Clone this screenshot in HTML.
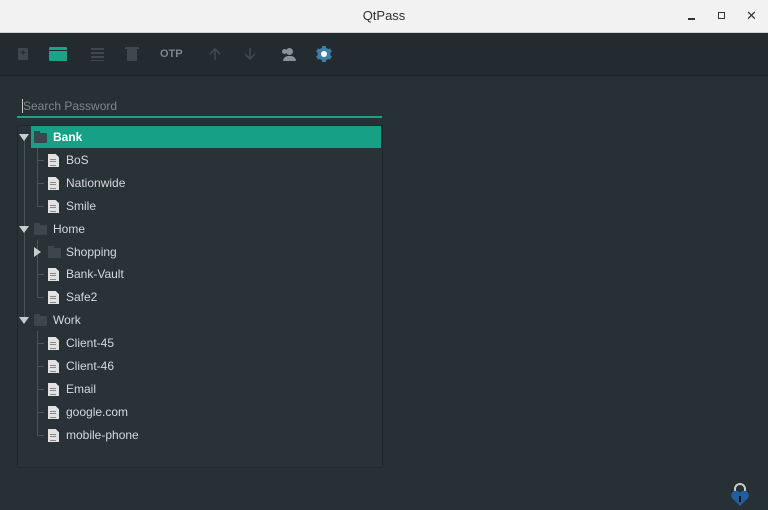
<!DOCTYPE html><html><head><style>
body{margin:0;width:768px;height:510px;background:#263035;font-family:"Liberation Sans","DejaVu Sans",sans-serif;overflow:hidden;position:relative}
.a{position:absolute}
.title{left:0;top:0;width:768px;height:32px;background:#f2f2f2;border-bottom:1px solid #d0d0d0}
.tb{left:0;top:33px;width:768px;height:42px;background:#232b30;border-bottom:1px solid #1d2327}
.t{font-size:12px;color:#d5d9db;position:absolute}
.doc{position:absolute;width:11px;height:13px;background:#e2e2e2;clip-path:polygon(0 0,70% 0,100% 25%,100% 100%,0 100%)}
.doc:after{content:"";position:absolute;left:2px;top:5px;width:6px;height:5px;border-top:1px solid #888;border-bottom:1px solid #888;background:linear-gradient(#e2e2e2 1px,#888 1px,#888 2px,#e2e2e2 2px)}
.fold{position:absolute;width:13px;height:10px;background:#3d464c;border-radius:1px}
.fold:before{content:"";position:absolute;left:0;top:-2px;width:6px;height:3px;background:#3d464c}
.arr{position:absolute;width:0;height:0;border-left:5px solid transparent;border-right:5px solid transparent;border-top:7px solid #c8cccf}
.vl{position:absolute;background:#4a5358;width:1px}
.hl{position:absolute;background:#4a5358;height:1px;width:7px}
</style></head><body>
<div class="a title"></div>
<div class="a" style="left:0;top:8px;width:768px;text-align:center;font-size:13px;color:#2e2e2e">QtPass</div>
<div class="a" style="left:688px;top:18px;width:7px;height:2px;background:#333"></div>
<div class="a" style="left:718px;top:12px;width:5px;height:5px;border:1.5px solid #333"></div>
<div class="a" style="left:746px;top:8px;font-size:13px;font-weight:bold;color:#333">✕</div>
<div class="a tb"></div>
<div class="a" style="left:18px;top:48px;width:10px;height:12px;background:#3f484e;border-radius:1px;color:#232b30;font-size:10px;line-height:12px;text-align:center;font-weight:bold">+</div>
<div class="a" style="left:49px;top:47px;width:18px;height:14px;background:#1aa386;border-radius:1px"></div>
<div class="a" style="left:49px;top:50px;width:18px;height:1px;background:#232b30"></div>
<div class="a" style="left:91px;top:48px;width:13px;height:13px;background:repeating-linear-gradient(#3f484e 0 2px,transparent 2px 4px)"></div>
<div class="a" style="left:127px;top:49px;width:10px;height:12px;background:#3f484e;border-radius:1px"></div>
<div class="a" style="left:125px;top:47px;width:14px;height:2px;background:#3f484e"></div>
<div class="a" style="left:160px;top:48px;font-size:11px;font-weight:bold;color:#7d868b">OTP</div>
<svg class="a" style="left:208px;top:47px" width="14" height="14"><path d="M7 13V2M2 7l5-5 5 5" fill="none" stroke="#3f484e" stroke-width="1.6"/></svg>
<svg class="a" style="left:243px;top:47px" width="14" height="14"><path d="M7 1v11M2 7l5 5 5-5" fill="none" stroke="#3f484e" stroke-width="1.6"/></svg>
<div class="a" style="left:286px;top:48px;width:7px;height:7px;border-radius:50%;background:#8a9296"></div>
<div class="a" style="left:282px;top:49px;width:5px;height:5px;border-radius:50%;background:#8a9296"></div>
<div class="a" style="left:283px;top:56px;width:13px;height:5px;border-radius:5px 5px 0 0;background:#8a9296"></div>
<svg class="a" style="left:315px;top:45px" width="18" height="18" viewBox="0 0 18 18"><g fill="#3f7fa6"><circle cx="9" cy="9" r="6.5"/><rect x="7" y="1" width="4" height="16"/><rect x="7" y="1" width="4" height="16" transform="rotate(60 9 9)"/><rect x="7" y="1" width="4" height="16" transform="rotate(120 9 9)"/></g><circle cx="9" cy="9" r="3" fill="#fff"/></svg>
<div class="a" style="left:17px;top:96px;width:365px;height:20px;border-bottom:2px solid #1aa386"></div>
<div class="a" style="left:23px;top:99px;font-size:12px;color:#7e878c">Search Password</div>
<div class="a" style="left:22px;top:99px;width:1px;height:14px;background:#ccc"></div>
<div class="a" style="left:17px;top:125px;width:364px;height:341px;background:#283237;border:1px solid #20282c"></div>
<div class="a" style="left:31px;top:126px;width:350px;height:22px;background:#16a085"></div>
<div class="vl" style="left:24px;top:140px;height:180px"></div>
<div class="vl" style="left:37px;top:148px;height:58px"></div>
<div class="vl" style="left:37px;top:240px;height:58px"></div>
<div class="vl" style="left:37px;top:331px;height:104px"></div>
<div class="arr" style="left:19px;top:134px"></div>
<div class="arr" style="left:19px;top:226px"></div>
<div class="arr" style="left:19px;top:317px"></div>
<div class="a" style="left:34px;top:247px;width:0;height:0;border-top:5px solid transparent;border-bottom:5px solid transparent;border-left:7px solid #c8cccf"></div>
<div class="fold" style="left:34px;top:133px"></div>
<div class="fold" style="left:34px;top:225px"></div>
<div class="fold" style="left:48px;top:248px"></div>
<div class="fold" style="left:34px;top:316px"></div>
<div class="t" style="left:53px;top:130px;color:#fff;font-weight:bold">Bank</div>
<div class="t" style="left:53px;top:222px">Home</div>
<div class="t" style="left:66px;top:245px">Shopping</div>
<div class="t" style="left:53px;top:313px">Work</div>
<div class="hl" style="left:37px;top:160px"></div><div class="doc" style="left:48px;top:154px"></div><div class="t" style="left:66px;top:153px">BoS</div>
<div class="hl" style="left:37px;top:183px"></div><div class="doc" style="left:48px;top:177px"></div><div class="t" style="left:66px;top:176px">Nationwide</div>
<div class="hl" style="left:37px;top:206px"></div><div class="doc" style="left:48px;top:200px"></div><div class="t" style="left:66px;top:199px">Smile</div>
<div class="hl" style="left:37px;top:274px"></div><div class="doc" style="left:48px;top:268px"></div><div class="t" style="left:66px;top:267px">Bank-Vault</div>
<div class="hl" style="left:37px;top:297px"></div><div class="doc" style="left:48px;top:291px"></div><div class="t" style="left:66px;top:290px">Safe2</div>
<div class="hl" style="left:37px;top:343px"></div><div class="doc" style="left:48px;top:337px"></div><div class="t" style="left:66px;top:336px">Client-45</div>
<div class="hl" style="left:37px;top:366px"></div><div class="doc" style="left:48px;top:360px"></div><div class="t" style="left:66px;top:359px">Client-46</div>
<div class="hl" style="left:37px;top:389px"></div><div class="doc" style="left:48px;top:383px"></div><div class="t" style="left:66px;top:382px">Email</div>
<div class="hl" style="left:37px;top:412px"></div><div class="doc" style="left:48px;top:406px"></div><div class="t" style="left:66px;top:405px">google.com</div>
<div class="hl" style="left:37px;top:435px"></div><div class="doc" style="left:48px;top:429px"></div><div class="t" style="left:66px;top:428px">mobile-phone</div>
<svg class="a" style="left:730px;top:482px" width="20" height="26" viewBox="0 0 20 26"><path d="M5 10V7a5 5 0 0 1 10 0v3" fill="none" stroke="#ccc" stroke-width="2"/><path d="M10 24L2 16a4.5 4.5 0 0 1 8-5a4.5 4.5 0 0 1 8 5z" fill="#1f5fa0"/><rect x="9" y="14" width="2" height="6" fill="#111"/></svg>
</body></html>
